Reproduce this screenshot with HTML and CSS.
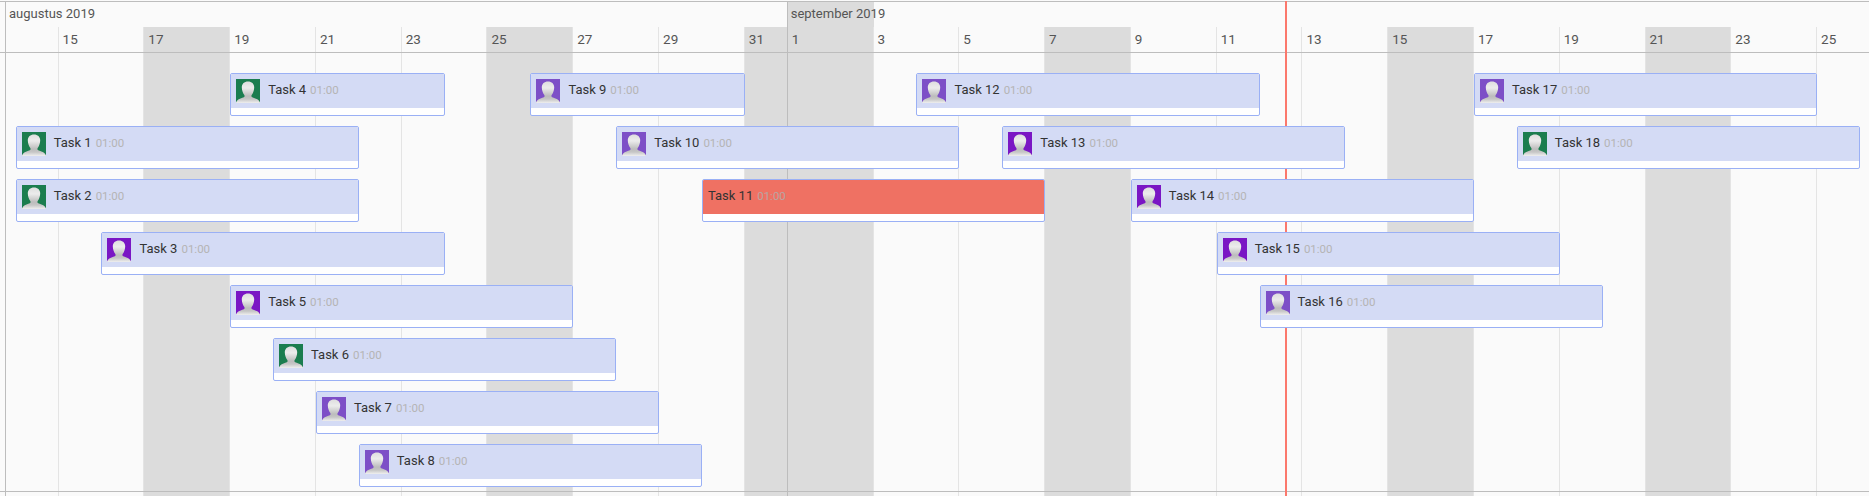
FILE: index.html
```html
<!DOCTYPE html>
<html lang="en">
<head>
    <meta charset="UTF-8">
    <title>Planning</title>
    <link rel="stylesheet" href="styles.css">
</head>
<body>
    <svg class="defs" aria-hidden="true">
        <defs>
            <linearGradient id="person-fill" x1="0" y1="0" x2="0" y2="1">
                <stop offset="0" stop-color="#dedede"/>
                <stop offset="0.3" stop-color="#ececec"/>
                <stop offset="0.68" stop-color="#bcbcbc"/>
                <stop offset="0.82" stop-color="#c6c6c6"/>
                <stop offset="1" stop-color="#efefef"/>
            </linearGradient>
            <symbol id="person" viewBox="0 0 24 24">
                <path fill="url(#person-fill)" d="M12 2.4c-3.7 0-6.2 2.3-6.2 5.8 0 3.2 1.1 5.8 2.5 7.7.5.9.4 1.8-.5 2.3-1.5.9-5 1.2-6.6 3.2-.6.7-1.1 1.5-1.4 2.6h24.4c-.3-1.1-.8-1.9-1.4-2.6-1.6-2-5.1-2.3-6.6-3.2-.9-.5-1-1.4-.5-2.3 1.4-1.9 2.5-4.5 2.5-7.7 0-3.5-2.5-5.8-6.2-5.8z"/>
            </symbol>
        </defs>
    </svg>

    <div class="chart">
        <!--weekends-->
        <div class="weekend" style="grid-column: 7 / span 2"></div>
        <div class="weekend" style="grid-column: 15 / span 2"></div>
        <div class="weekend" style="grid-column: 21 / span 1"></div>
        <div class="weekend weekend-tall" style="grid-column: 22 / span 2"></div>
        <div class="weekend" style="grid-column: 28 / span 2"></div>
        <div class="weekend" style="grid-column: 36 / span 2"></div>
        <div class="weekend" style="grid-column: 42 / span 2"></div>

        <!--day ticks-->
        <div class="tick" style="grid-column: 5 / span 2">15</div>
        <div class="tick" style="grid-column: 7 / span 2">17</div>
        <div class="tick" style="grid-column: 9 / span 2">19</div>
        <div class="tick" style="grid-column: 11 / span 2">21</div>
        <div class="tick" style="grid-column: 13 / span 2">23</div>
        <div class="tick" style="grid-column: 15 / span 2">25</div>
        <div class="tick" style="grid-column: 17 / span 2">27</div>
        <div class="tick" style="grid-column: 19 / span 2">29</div>
        <div class="tick" style="grid-column: 21 / span 1">31</div>
        <div class="tick" style="grid-column: 22 / span 2">1</div>
        <div class="tick" style="grid-column: 24 / span 2">3</div>
        <div class="tick" style="grid-column: 26 / span 2">5</div>
        <div class="tick" style="grid-column: 28 / span 2">7</div>
        <div class="tick" style="grid-column: 30 / span 2">9</div>
        <div class="tick" style="grid-column: 32 / span 2">11</div>
        <div class="tick" style="grid-column: 34 / span 2">13</div>
        <div class="tick" style="grid-column: 36 / span 2">15</div>
        <div class="tick" style="grid-column: 38 / span 2">17</div>
        <div class="tick" style="grid-column: 40 / span 2">19</div>
        <div class="tick" style="grid-column: 42 / span 2">21</div>
        <div class="tick" style="grid-column: 44 / span 2">23</div>
        <div class="tick" style="grid-column: 46 / span 2">25</div>

        <!--months-->
        <div class="month month-aug">augustus 2019</div>
        <div class="month month-sep">september 2019</div>

        <!--rules-->
        <div class="rule rule-top"></div>
        <div class="rule rule-head"></div>
        <div class="rule rule-bottom"></div>

        <div class="today"></div>

        <!--tasks-->
        <div class="task row-1" style="grid-column: 9 / span 5"><div class="task-body"><svg class="avatar green"><use href="#person"/></svg><span class="task-name">Task 4</span><span class="task-time">01:00</span></div></div>
        <div class="task row-1" style="grid-column: 16 / span 5"><div class="task-body"><svg class="avatar purple"><use href="#person"/></svg><span class="task-name">Task 9</span><span class="task-time">01:00</span></div></div>
        <div class="task row-1" style="grid-column: 25 / span 8"><div class="task-body"><svg class="avatar purple"><use href="#person"/></svg><span class="task-name">Task 12</span><span class="task-time">01:00</span></div></div>
        <div class="task row-1" style="grid-column: 38 / span 8"><div class="task-body"><svg class="avatar purple"><use href="#person"/></svg><span class="task-name">Task 17</span><span class="task-time">01:00</span></div></div>

        <div class="task row-2" style="grid-column: 4 / span 8"><div class="task-body"><svg class="avatar green"><use href="#person"/></svg><span class="task-name">Task 1</span><span class="task-time">01:00</span></div></div>
        <div class="task row-2" style="grid-column: 18 / span 8"><div class="task-body"><svg class="avatar purple"><use href="#person"/></svg><span class="task-name">Task 10</span><span class="task-time">01:00</span></div></div>
        <div class="task row-2" style="grid-column: 27 / span 8"><div class="task-body"><svg class="avatar violet"><use href="#person"/></svg><span class="task-name">Task 13</span><span class="task-time">01:00</span></div></div>
        <div class="task row-2" style="grid-column: 39 / span 8"><div class="task-body"><svg class="avatar green"><use href="#person"/></svg><span class="task-name">Task 18</span><span class="task-time">01:00</span></div></div>

        <div class="task row-3" style="grid-column: 4 / span 8"><div class="task-body"><svg class="avatar green"><use href="#person"/></svg><span class="task-name">Task 2</span><span class="task-time">01:00</span></div></div>
        <div class="task task-late row-3" style="grid-column: 20 / span 8"><div class="task-body"><span class="task-name">Task 11</span><span class="task-time">01:00</span></div></div>
        <div class="task row-3" style="grid-column: 30 / span 8"><div class="task-body"><svg class="avatar violet"><use href="#person"/></svg><span class="task-name">Task 14</span><span class="task-time">01:00</span></div></div>

        <div class="task row-4" style="grid-column: 6 / span 8"><div class="task-body"><svg class="avatar violet"><use href="#person"/></svg><span class="task-name">Task 3</span><span class="task-time">01:00</span></div></div>
        <div class="task row-4" style="grid-column: 32 / span 8"><div class="task-body"><svg class="avatar violet"><use href="#person"/></svg><span class="task-name">Task 15</span><span class="task-time">01:00</span></div></div>

        <div class="task row-5" style="grid-column: 9 / span 8"><div class="task-body"><svg class="avatar violet"><use href="#person"/></svg><span class="task-name">Task 5</span><span class="task-time">01:00</span></div></div>
        <div class="task row-5" style="grid-column: 33 / span 8"><div class="task-body"><svg class="avatar purple"><use href="#person"/></svg><span class="task-name">Task 16</span><span class="task-time">01:00</span></div></div>

        <div class="task row-6" style="grid-column: 10 / span 8"><div class="task-body"><svg class="avatar green"><use href="#person"/></svg><span class="task-name">Task 6</span><span class="task-time">01:00</span></div></div>
        <div class="task row-7" style="grid-column: 11 / span 8"><div class="task-body"><svg class="avatar purple"><use href="#person"/></svg><span class="task-name">Task 7</span><span class="task-time">01:00</span></div></div>
        <div class="task row-8" style="grid-column: 12 / span 8"><div class="task-body"><svg class="avatar purple"><use href="#person"/></svg><span class="task-name">Task 8</span><span class="task-time">01:00</span></div></div>
    </div>
</body>
</html>
```

FILE: styles.css
```css
html,body{
    margin: 0;
    height: 100%;
    background-color: #fafafa;
    overflow: hidden;
}
.defs{
    display: block;
    width: 0;
    height: 0;
}
/**grid: gutter, left rule, part of 14 aug, then one column per day**/
.chart{
    display: grid;
    grid-template-columns: 5px 1px 9.7px repeat(43, 42.9px) 1fr;
    grid-template-rows: 1px 25px 25px 1px 20px repeat(7, 53px) 47px 1px 4px;
    margin-top: 1px;
    height: 495px;
    font-family: Roboto, "Liberation Sans", sans-serif;
    color: #555;
}
/**weekend bands**/
.weekend{
    grid-row: 3 / -1;
    background-color: #dcdcdc;
}
.weekend-tall{
    grid-row: 2 / -1;
}
/**day ticks, the line runs down the whole chart**/
.tick{
    grid-row: 3 / -1;
    margin-left: -1px;
    padding: 4px 0 0 4px;
    border-left: 1px solid #e4e4e4;
    font-size: 13.5px;
    line-height: 16px;
}
/**month labels**/
.month{
    grid-row: 2 / -1;
    padding: 4px 0 0 3px;
    font-size: 13px;
    line-height: 16px;
    white-space: nowrap;
}
.month-aug{
    grid-column: 2 / span 12;
    border-left: 1px solid #bdbdbd;
}
.month-sep{
    grid-column: 22 / span 12;
    margin-left: -1px;
    padding-left: 3px;
    border-left: 1px solid #bdbdbd;
}
/**horizontal rules**/
.rule{
    grid-column: 1 / -1;
    background-color: #bdbdbd;
}
.rule-top{
    grid-row: 1;
}
.rule-head{
    grid-row: 4;
}
.rule-bottom{
    grid-row: 14;
}
/**current time**/
.today{
    grid-column: 33;
    grid-row: 1 / -1;
    margin-left: 25px;
    width: 2px;
    background-color: #fb786c;
}
/**task bars**/
.task{
    box-sizing: border-box;
    height: 43px;
    border: 1px solid #9ab0f5;
    border-radius: 2px;
    background-color: #fff;
    overflow: hidden;
}
.row-1{ grid-row: 6; }
.row-2{ grid-row: 7; }
.row-3{ grid-row: 8; }
.row-4{ grid-row: 9; }
.row-5{ grid-row: 10; }
.row-6{ grid-row: 11; }
.row-7{ grid-row: 12; }
.row-8{ grid-row: 13; }
.task-body{
    display: flex;
    align-items: center;
    box-sizing: border-box;
    padding: 0 5px;
    height: 34px;
    background-color: #d4dbf5;
}
.task-late .task-body{
    background-color: #ef7163;
}
.avatar{
    flex: none;
    margin-right: 8px;
    width: 24px;
    height: 24px;
}
.green{
    background-color: #1b7d4f;
}
.violet{
    background-color: #7a16c4;
}
.purple{
    background-color: #7d4fc7;
}
.task-name{
    margin-bottom: 3px;
    font-size: 13px;
    line-height: 16px;
    color: #333;
}
.task-time{
    margin: 0 0 2px 4px;
    font-size: 11.5px;
    line-height: 16px;
    color: #b4b4b4;
}
.task-late .task-time{
    color: #b9a5a2;
}
```
